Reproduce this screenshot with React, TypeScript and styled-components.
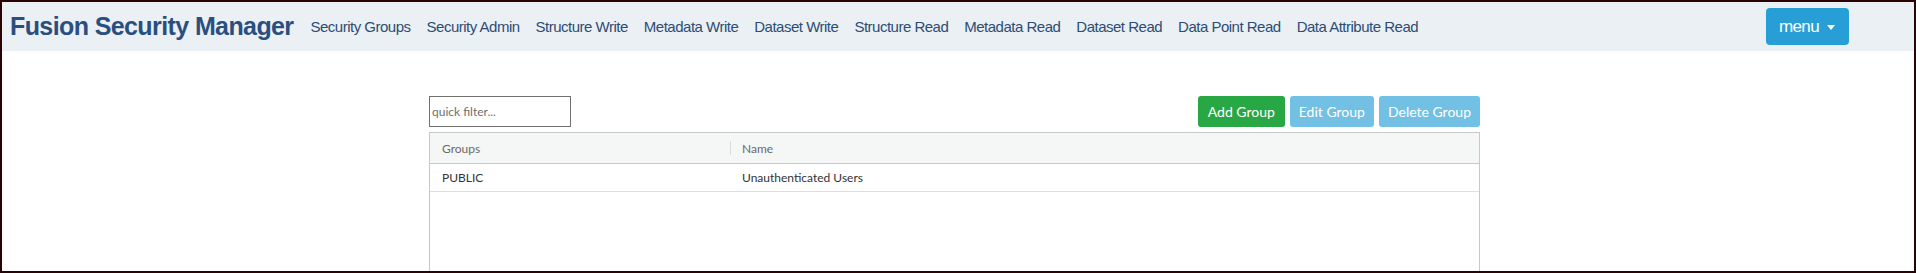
import React from 'react';
import styled, { createGlobalStyle } from 'styled-components';

const GlobalStyle = createGlobalStyle`
  html, body {
    margin: 0;
    padding: 0;
    background: #fff;
  }
  * {
    box-sizing: border-box;
  }
`

type rowType = {
  group: string
  name: string
}

const rows: rowType[] = [
  { group: 'PUBLIC', name: 'Unauthenticated Users' },
]

const links = [
  'Security Groups',
  'Security Admin',
  'Structure Write',
  'Metadata Write',
  'Dataset Write',
  'Structure Read',
  'Metadata Read',
  'Dataset Read',
  'Data Point Read',
  'Data Attribute Read',
]

const App = () => {
  return (
    <Frame>
      <GlobalStyle />
      <NavBar>
        <Brand>Fusion Security Manager</Brand>
        <NavList>
          {links.map((l) => (
            <NavLink key={l} href="#">{l}</NavLink>
          ))}
        </NavList>
        <MenuButton>
          menu
          <Caret />
        </MenuButton>
      </NavBar>
      <Main>
        <Container>
          <Toolbar>
            <Filter placeholder="quick filter..." />
            <ButtonGroup>
              <Button variant="success">Add Group</Button>
              <Button variant="info" disabled>Edit Group</Button>
              <Button variant="info" disabled>Delete Group</Button>
            </ButtonGroup>
          </Toolbar>
          <Grid>
            <HeaderRow>
              <HeaderCell>Groups</HeaderCell>
              <HeaderCell divider>Name</HeaderCell>
            </HeaderRow>
            {rows.map((r) => (
              <Row key={r.group}>
                <Cell>{r.group}</Cell>
                <Cell>{r.name}</Cell>
              </Row>
            ))}
          </Grid>
        </Container>
      </Main>
    </Frame>
  );
};

export default App;

const Frame = styled.div`
  width: 1916px;
  height: 273px;
  border: 2px solid #2a0404;
  overflow: hidden;
  display: flex;
  flex-direction: column;
`
const NavBar = styled.nav`
  height: 49px;
  flex-shrink: 0;
  background: #ebf0f5;
  display: flex;
  align-items: center;
  padding: 0 65px 0 8px;
`
const Brand = styled.a`
  font-family: "Liberation Sans", Arial, sans-serif;
  font-weight: bold;
  font-size: 25px;
  letter-spacing: -0.6px;
  color: #2a4f7e;
  margin-right: 9px;
  white-space: nowrap;
`
const NavList = styled.div`
  display: flex;
  align-items: center;
`
const NavLink = styled.a`
  font-family: "Liberation Sans", Arial, sans-serif;
  font-size: 15px;
  letter-spacing: -0.5px;
  color: #2c4d74;
  text-decoration: none;
  padding: 0 8px;
  white-space: nowrap;
`
const MenuButton = styled.button`
  margin-left: auto;
  height: 37px;
  display: flex;
  align-items: center;
  gap: 8px;
  padding: 0 14px 0 13px;
  border: none;
  border-radius: 4px;
  background: #279fd6;
  color: #fff;
  font-family: "Liberation Sans", Arial, sans-serif;
  font-size: 17px;
  letter-spacing: -0.6px;
`
const Caret = styled.span`
  width: 0;
  height: 0;
  border-top: 5px solid #fff;
  border-left: 4px solid transparent;
  border-right: 4px solid transparent;
  margin-top: 1px;
`
const Main = styled.main`
  flex: 1;
  padding: 45px 7px 0 0;
`
const Container = styled.div`
  width: 1051px;
  margin: 0 auto;
  display: flex;
  flex-direction: column;
  gap: 5px;
`
const Toolbar = styled.div`
  display: flex;
  justify-content: space-between;
  align-items: center;
  height: 31px;
`
const Filter = styled.input`
  width: 142px;
  height: 31px;
  border: 1px solid #707070;
  padding: 1px 2px;
  font-family: Lato, "Open Sans", sans-serif;
  font-size: 12px;
  color: #222;
  outline: none;
  &::placeholder {
    color: #6f6f6f;
  }
`
const ButtonGroup = styled.div`
  display: flex;
  gap: 5px;
`
const Button = styled.button<{ variant: 'success' | 'info' }>`
  height: 31px;
  padding: 0 ${(p) => (p.variant === 'success' ? '10px' : '9px')};
  border: none;
  border-radius: 3px;
  background: ${(p) => (p.variant === 'success' ? '#28a745' : '#279fd6')};
  color: #fff;
  font-family: Lato, "Open Sans", sans-serif;
  font-size: 14px;
  &:disabled {
    opacity: 0.65;
  }
`
const Grid = styled.div`
  border: 1px solid #c6c8ca;
  height: 200px;
  font-family: Lato, "Open Sans", sans-serif;
  font-size: 12px;
  font-weight: 400;
`
const HeaderRow = styled.div`
  display: grid;
  grid-template-columns: 300px 1fr;
  height: 31px;
  background: #f5f6f6;
  border-bottom: 1px solid #c6c8ca;
  align-items: center;
`
const HeaderCell = styled.div<{ divider?: boolean }>`
  position: relative;
  padding-left: 12px;
  color: #6a6a6a;
  &::before {
    content: '';
    display: ${(p) => (p.divider ? 'block' : 'none')};
    position: absolute;
    left: 0;
    top: 50%;
    width: 1px;
    height: 14px;
    margin-top: -7px;
    background: #dcdcdc;
  }
`
const Row = styled.div`
  display: grid;
  grid-template-columns: 300px 1fr;
  height: 28px;
  align-items: center;
  border-bottom: 1px solid #dde0e3;
`
const Cell = styled.div`
  padding-left: 12px;
  color: #333;
`
